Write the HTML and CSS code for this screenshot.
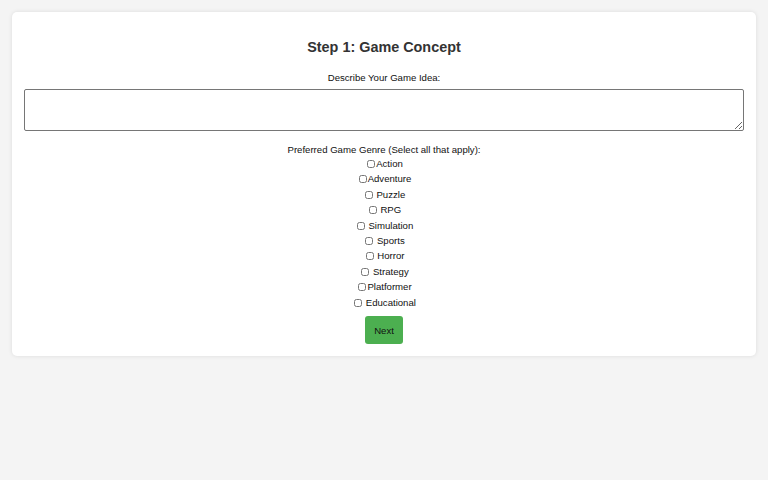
FILE: index.html
```html
<!DOCTYPE html>
<html lang="en">
<head>
<meta charset="UTF-8">
<meta name="viewport" content="width=device-width, initial-scale=1.0">
<title>Game Concept</title>
<link rel="stylesheet" href="styles.css">
</head>
<body>

<div class="container">
    <h2>Step 1: Game Concept</h2>

    <label class="field-label" for="idea">Describe Your Game Idea:</label>
    <textarea id="idea" class="idea-input"></textarea>

    <div class="field-label genre-label">Preferred Game Genre (Select all that apply):</div>
    <div class="genres">
        <label><input type="checkbox">Action</label>
        <label><input type="checkbox">Adventure</label>
        <label><input type="checkbox"> Puzzle</label>
        <label><input type="checkbox"> RPG</label>
        <label><input type="checkbox"> Simulation</label>
        <label><input type="checkbox"> Sports</label>
        <label><input type="checkbox"> Horror</label>
        <label><input type="checkbox"> Strategy</label>
        <label><input type="checkbox">Platformer</label>
        <label><input type="checkbox"> Educational</label>
    </div>

    <button class="next-btn">Next</button>
</div>

</body>
</html>
```

FILE: styles.css
```css
* {
    box-sizing: border-box;
    font-family: "Liberation Sans", Arial, sans-serif;
}
body {
    margin: 0;
    padding: 12px;
    background-color: #f4f4f4;
}
.container {
    background-color: #fff;
    border-radius: 5px;
    box-shadow: 0 0 4px rgba(0, 0, 0, 0.1);
    padding: 12px;
    display: flex;
    flex-direction: column;
    align-items: center;
}
h2 {
    font-size: 14.4px;
    color: #333;
    margin: 15px 0 17px;
    line-height: 16px;
}
.field-label {
    font-size: 9.6px;
    line-height: 12px;
    color: #111;
}
.idea-input {
    width: 100%;
    height: 42px;
    margin: 5px 0 13px;
    border: 1px solid #767676;
    border-radius: 2px;
    resize: vertical;
}
.genres {
    text-align: center;
}
.genres label {
    display: block;
    font-size: 9.6px;
    line-height: 15.4px;
    color: #111;
}
.genres input {
    width: 8px;
    height: 8px;
    margin: 0 1px 0 2px;
    vertical-align: -1px;
}
.next-btn {
    margin-top: 6px;
    width: 38px;
    height: 28px;
    background-color: #4caf50;
    border: none;
    border-radius: 3px;
    color: #111;
    font-size: 9.6px;
    cursor: pointer;
}
```
